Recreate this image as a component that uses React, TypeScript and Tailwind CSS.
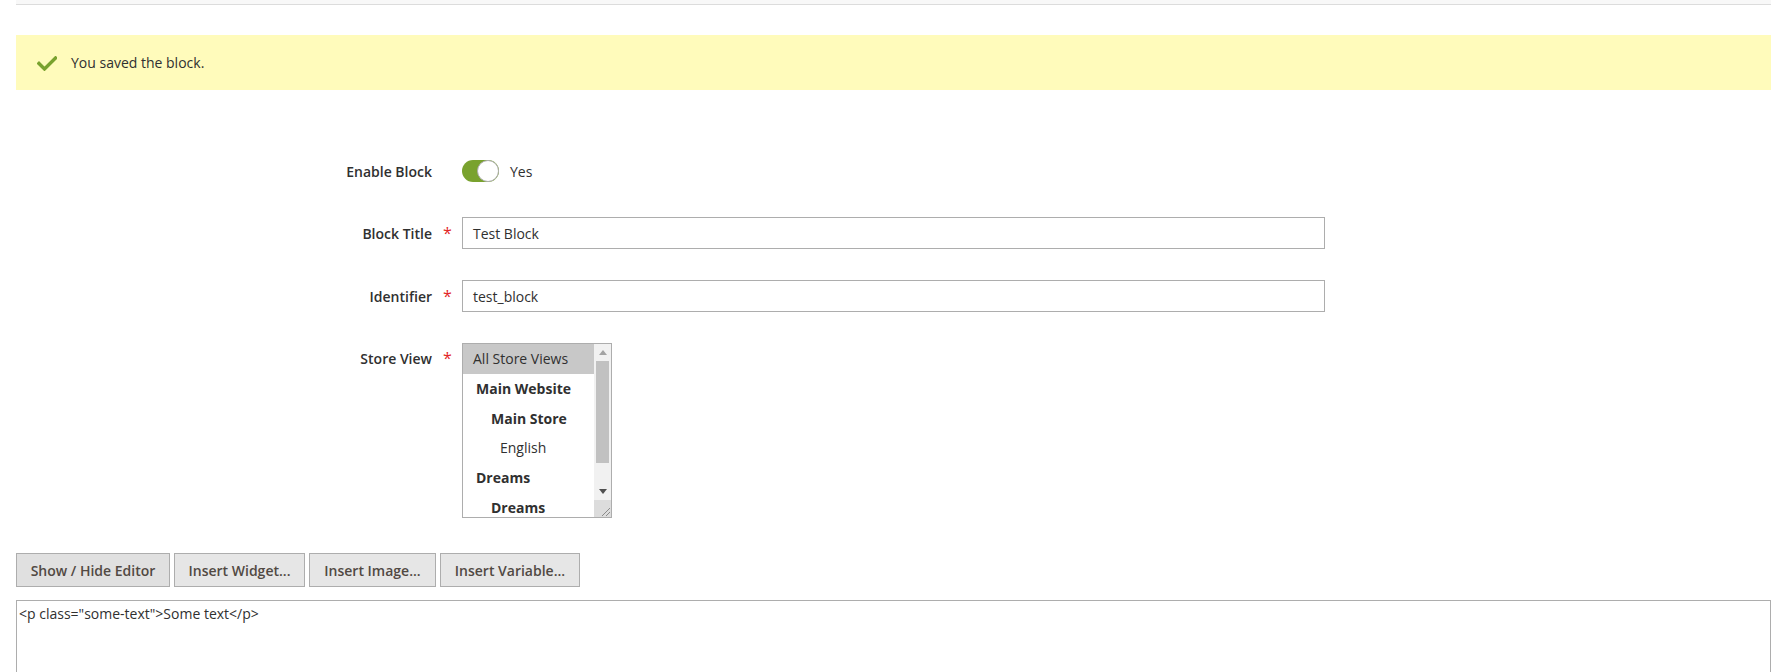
import React from "react";

const font = { fontFamily: '"Open Sans", "Noto Sans", sans-serif' };

function Label({ text, required, top }: { text: string; required?: boolean; top?: boolean }) {
  return (
    <div className={`flex w-[446px] shrink-0 ${top ? "items-start pt-[6px]" : "items-center"}`}>
      <div className="w-[416px] text-right text-[14px] font-semibold text-[#303030] leading-[19px]">{text}</div>
      <div className="w-[30px] text-center text-[#e22626] text-[16px] leading-[19px] pl-[1px]">{required ? "*" : ""}</div>
    </div>
  );
}

const options: { text: string; bold?: boolean; indent: string; selected?: boolean }[] = [
  { text: "All Store Views", indent: "pl-[10px]", selected: true },
  { text: "Main Website", bold: true, indent: "pl-[13px]" },
  { text: "Main Store", bold: true, indent: "pl-[28px]" },
  { text: "English", indent: "pl-[37px]" },
  { text: "Dreams", bold: true, indent: "pl-[13px]" },
  { text: "Dreams", bold: true, indent: "pl-[28px]" },
];

export default function App() {
  return (
    <div className="w-[1792px] h-[672px] overflow-hidden bg-white" style={font}>
      <div className="pl-[16px] pr-[21px]">
        <div className="h-[5px] bg-[#f8f8f8] border-b border-[#dcdcdc]" />
        <div className="mt-[30px] h-[55px] bg-[#fffbbb] flex items-center">
          <svg width="20" height="15" viewBox="0 0 20 15" className="ml-[21px] mr-[14px] mt-[1px]">
            <path d="M2 7.5 L7.5 13 L18.5 2" fill="none" stroke="#79a22e" strokeWidth="3.4" strokeLinecap="square" />
          </svg>
          <span className="text-[14px] text-[#303030] leading-[19px]">You saved the block.</span>
        </div>

        <div className="mt-[70px] flex h-[22px]">
          <Label text="Enable Block" />
          <div className="flex items-center">
            <div className="relative w-[37px] h-[22px] rounded-full bg-[#79a22e]">
              <div className="absolute right-0 top-0 w-[22px] h-[22px] rounded-full bg-white border border-[#adadad]" />
            </div>
            <span className="ml-[11px] text-[14px] text-[#303030] leading-[19px]">Yes</span>
          </div>
        </div>

        <div className="mt-[35px] flex">
          <Label text="Block Title" required />
          <div className="w-[863px] h-[32px] border border-[#adadad] flex items-center px-[10px] text-[14px] text-[#303030]">
            Test Block
          </div>
        </div>

        <div className="mt-[31px] flex">
          <Label text="Identifier" required />
          <div className="w-[863px] h-[32px] border border-[#adadad] flex items-center px-[10px] text-[14px] text-[#303030]">
            test_block
          </div>
        </div>

        <div className="mt-[31px] flex">
          <Label text="Store View" required top />
          <div className="w-[150px] h-[175px] border border-[#adadad] flex overflow-hidden">
            <div className="flex-1 overflow-hidden">
              {options.map((o, i) => (
                <div
                  key={i}
                  className={`h-[29.7px] flex items-center text-[14px] text-[#303030] whitespace-nowrap ${o.indent} ${
                    o.bold ? "font-bold" : "font-normal"
                  } ${o.selected ? "bg-[#c8c8c8]" : ""}`}
                >
                  {o.text}
                </div>
              ))}
            </div>
            <div className="w-[17px] flex flex-col bg-[#f1f1f1]">
              <div className="h-[17px] flex items-center justify-center">
                <svg width="8" height="5" viewBox="0 0 8 5">
                  <path d="M0 5 L4 0 L8 5 Z" fill="#a3a3a3" />
                </svg>
              </div>
              <div className="h-[102px] mx-[2px] bg-[#c1c1c1]" />
              <div className="flex-1" />
              <div className="h-[17px] flex items-center justify-center">
                <svg width="8" height="5" viewBox="0 0 8 5">
                  <path d="M0 0 L4 5 L8 0 Z" fill="#505050" />
                </svg>
              </div>
              <div className="h-[17px] bg-[#dcdcdc] flex items-end justify-end">
                <svg width="12" height="12" viewBox="0 0 12 12">
                  <path d="M11 3 L3 11 M11 7 L7 11" stroke="#8a8a8a" strokeWidth="1" />
                </svg>
              </div>
            </div>
          </div>
        </div>

        <div className="mt-[35px] flex gap-[4px]">
          <button className="w-[154px] h-[34px] bg-[#e0e0e0] border border-[#adadad] text-[14px] font-semibold text-[#514943]">
            Show / Hide Editor
          </button>
          <button className="w-[131px] h-[34px] bg-[#e6e6e6] border border-[#adadad] text-[14px] font-semibold text-[#514943]">
            Insert Widget...
          </button>
          <button className="w-[127px] h-[34px] bg-[#e6e6e6] border border-[#adadad] text-[14px] font-semibold text-[#514943]">
            Insert Image...
          </button>
          <button className="w-[140px] h-[34px] bg-[#e6e6e6] border border-[#adadad] text-[14px] font-semibold text-[#514943]">
            Insert Variable...
          </button>
        </div>

        <div className="mt-[13px] h-[200px] border border-[#adadad] px-[2px] pt-[3px] text-[14px] text-[#303030] leading-[19px]">
          {'<p class="some-text">Some text</p>'}
        </div>
      </div>
    </div>
  );
}
